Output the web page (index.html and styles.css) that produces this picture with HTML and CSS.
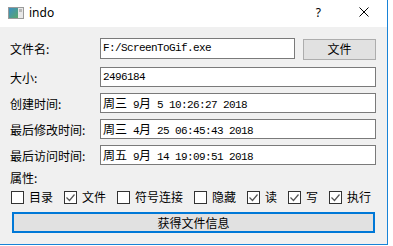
FILE: index.html
```html
<!DOCTYPE html>
<html>
<head>
<meta charset="utf-8">
<link rel="stylesheet" href="styles.css">
</head>
<body>
<div class="window">
  <div class="titlebar">
    <svg class="appicon" width="16" height="12" viewBox="0 0 16 12">
      <defs>
        <linearGradient id="g" x1="0" y1="0" x2="1" y2="1">
          <stop offset="0" stop-color="#3b8fc4"/>
          <stop offset="1" stop-color="#5aa66a"/>
        </linearGradient>
      </defs>
      <rect x="0.5" y="0.5" width="15" height="11" fill="#e8e8e8" stroke="#9a9a9a"/>
      <rect x="1" y="1" width="9" height="10" fill="url(#g)"/>
      <rect x="11" y="2" width="3" height="3" fill="#b8b8b8"/>
    </svg>
    <span class="title">indo</span>
    <span class="help">?</span>
    <svg class="close" width="10" height="10" viewBox="0 0 10 10">
      <path d="M0.5 0.5 L9.5 9.5 M9.5 0.5 L0.5 9.5" stroke="#000" stroke-width="1"/>
    </svg>
  </div>
  <div class="content">
    <div class="form">
      <div class="label">文件名:</div>
      <div class="fileline">
        <div class="field path">F:/ScreenToGif.exe</div>
        <div class="btn">文件</div>
      </div>
      <div class="label">大小:</div>
      <div class="field">2496184</div>
      <div class="label">创建时间:</div>
      <div class="field"><span class="cjk">周三</span> 9<span class="cjk">月</span> 5 10:26:27 2018</div>
      <div class="label">最后修改时间:</div>
      <div class="field"><span class="cjk">周三</span> 4<span class="cjk">月</span> 25 06:45:43 2018</div>
      <div class="label">最后访问时间:</div>
      <div class="field"><span class="cjk">周五</span> 9<span class="cjk">月</span> 14 19:09:51 2018</div>
    </div>
    <div class="attr">属性:</div>
    <div class="checks">
      <div class="check"><span class="box"></span>目录</div>
      <div class="check"><span class="box on"><svg width="11" height="11" viewBox="0 0 11 11"><path d="M1.5 5.5 L4.5 8.5 L9.5 2.5" fill="none" stroke="#555" stroke-width="1.2"/></svg></span>文件</div>
      <div class="check"><span class="box"></span>符号连接</div>
      <div class="check"><span class="box"></span>隐藏</div>
      <div class="check"><span class="box on"><svg width="11" height="11" viewBox="0 0 11 11"><path d="M1.5 5.5 L4.5 8.5 L9.5 2.5" fill="none" stroke="#555" stroke-width="1.2"/></svg></span>读</div>
      <div class="check"><span class="box on"><svg width="11" height="11" viewBox="0 0 11 11"><path d="M1.5 5.5 L4.5 8.5 L9.5 2.5" fill="none" stroke="#555" stroke-width="1.2"/></svg></span>写</div>
      <div class="check"><span class="box on"><svg width="11" height="11" viewBox="0 0 11 11"><path d="M1.5 5.5 L4.5 8.5 L9.5 2.5" fill="none" stroke="#555" stroke-width="1.2"/></svg></span>执行</div>
    </div>
    <div class="mainbtn">获得文件信息</div>
  </div>
</div>
</body>
</html>
```
FILE: styles.css
```css
html, body {
  margin: 0;
  padding: 0;
  background: #ffffff;
}
body {
  font-family: "Noto Sans CJK SC", "Noto Sans", sans-serif;
  font-size: 12px;
  color: #000;
}
.window {
  width: 387px;
  height: 244px;
  border-right: 1px solid #1883d7;
  border-bottom: 1px solid #1883d7;
  background: #f0f0f0;
  display: flex;
  flex-direction: column;
}
.titlebar {
  height: 27px;
  background: #ffffff;
  display: flex;
  align-items: center;
  flex-shrink: 0;
}
.appicon {
  margin-left: 8px;
  margin-top: -2px;
}
.title {
  margin-left: 5px;
  font-family: "Noto Sans", sans-serif;
  font-size: 12px;
  margin-top: -3px;
}
.help {
  margin-left: auto;
  font-family: "Noto Sans", sans-serif;
  font-size: 12px;
  margin-top: -3px;
}
.close {
  margin-left: 38px;
  margin-right: 18px;
  margin-top: -3px;
}
.content {
  flex: 1;
  padding: 11px 12px 0 10px;
}
.form {
  display: grid;
  grid-template-columns: 90px 1fr;
  grid-template-rows: 29px 26px 26px 26px 20px;
  align-items: start;
}
.label {
  line-height: 20px;
  height: 20px;
  padding-top: 1px;
  white-space: nowrap;
}
.fileline {
  display: flex;
  gap: 8px;
}
.field {
  box-sizing: border-box;
  height: 20px;
  border: 1px solid #7a7a7a;
  background: #fff;
  padding-left: 2px;
  font-family: "Liberation Mono", monospace;
  font-size: 11px;
  letter-spacing: -0.6px;
  line-height: 18px;
  white-space: pre;
  overflow: hidden;
}
.fileline .field {
  width: 195px;
  height: 21px;
  line-height: 19px;
}
.field .cjk {
  font-family: "Noto Sans CJK SC", sans-serif;
  font-size: 12px;
  letter-spacing: 0;
}
.btn {
  box-sizing: border-box;
  width: 73px;
  height: 21px;
  margin-top: 1px;
  border: 1px solid #adadad;
  background: #e1e1e1;
  text-align: center;
  line-height: 18px;
}
.attr {
  margin-top: 6px;
  line-height: 14px;
  height: 14px;
}
.checks {
  display: flex;
  gap: 11px;
  margin-top: 4px;
  padding-left: 1px;
  line-height: 16px;
  height: 16px;
}
.check {
  display: flex;
  align-items: center;
  gap: 5px;
}
.box {
  box-sizing: border-box;
  width: 13px;
  height: 13px;
  border: 1px solid #333;
  background: #fff;
  display: flex;
  align-items: center;
  justify-content: center;
}
.box svg {
  display: block;
}
.mainbtn {
  box-sizing: border-box;
  margin-top: 7px;
  margin-left: 2px;
  height: 21px;
  border: 2px solid #0078d7;
  background: #e1e1e1;
  text-align: center;
  line-height: 17px;
}
```
